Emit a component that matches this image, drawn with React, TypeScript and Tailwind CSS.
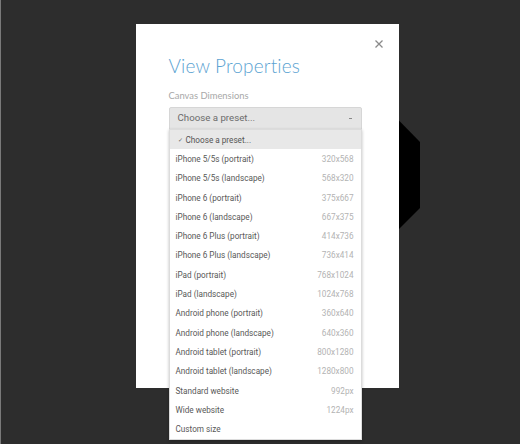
import React from "react";

const PRESETS = [
  { name: "iPhone 5/5s (portrait)", size: "320x568" },
  { name: "iPhone 5/5s (landscape)", size: "568x320" },
  { name: "iPhone 6 (portrait)", size: "375x667" },
  { name: "iPhone 6 (landscape)", size: "667x375" },
  { name: "iPhone 6 Plus (portrait)", size: "414x736" },
  { name: "iPhone 6 Plus (landscape)", size: "736x414" },
  { name: "iPad (portrait)", size: "768x1024" },
  { name: "iPad (landscape)", size: "1024x768" },
  { name: "Android phone (portrait)", size: "360x640" },
  { name: "Android phone (landscape)", size: "640x360" },
  { name: "Android tablet (portrait)", size: "800x1280" },
  { name: "Android tablet (landscape)", size: "1280x800" },
  { name: "Standard website", size: "992px" },
  { name: "Wide website", size: "1224px" },
  { name: "Custom size", size: "" },
];

export default function App() {
  return (
    <div
      className="relative w-[520px] h-[444px] overflow-hidden bg-[#2d2d2d] border-l border-[#7a7a7a] flex justify-center pt-6"
      style={{ fontFamily: "Lato, 'Open Sans', sans-serif" }}
    >
      {/* shape on the canvas behind the dialog */}
      <svg className="absolute left-0 top-0" width="520" height="444">
        <polygon points="370,92 419,142 419,208 370,257" fill="#000" />
      </svg>

      <div className="relative ml-[13px] w-[263px] h-[364px] bg-white">
        <button className="absolute right-[16px] top-[16px] text-[#8a8a8a]">
          <svg width="8" height="8" viewBox="0 0 8 8">
            <path d="M0.5 0.5 L7.5 7.5 M7.5 0.5 L0.5 7.5" stroke="currentColor" strokeWidth="1.3" />
          </svg>
        </button>

        <div className="pl-[33px] pt-[29px]">
          <h1 className="text-[19px] leading-[26px] text-[#5ca3d2] font-light tracking-[0.15px]">
            View Properties
          </h1>
          <div className="mt-[11px] text-[9.4px] leading-[12px] text-[#a8a8a8]">Canvas Dimensions</div>

          <div className="relative mt-[5px] w-[193px]">
            <div className="h-[23px] flex items-center justify-between px-[8px] bg-[#e5e5e5] border border-[#d6d6d6] rounded-t-[2px]">
              <span className="text-[9.7px] text-[#6b6b6b]" style={{ fontFamily: "Roboto, sans-serif" }}>
                Choose a preset...
              </span>
              <span className="w-[3px] h-[1px] bg-[#888] mr-[1px]"></span>
            </div>

            <div
              className="absolute left-0 top-[22px] w-[193px] bg-white border border-[#dcdcdc] shadow-[0_1px_3px_rgba(0,0,0,0.25)] z-10"
              style={{ fontFamily: "Roboto, sans-serif" }}
            >
              <div className="h-[19.33px] flex items-center bg-[#e8e8e8] pl-[8px] text-[8.2px] text-[#555]">
                <span className="text-[6px] mr-[3px] text-[#666]">✓</span>
                Choose a preset...
              </div>
              {PRESETS.map((p) => (
                <div
                  key={p.name}
                  className="h-[19.33px] flex items-center justify-between pl-[6px] pr-[7px] text-[8.2px]"
                >
                  <span className="text-[#585858]">{p.name}</span>
                  <span className="text-[#b3b3b3]">{p.size}</span>
                </div>
              ))}
            </div>
          </div>
        </div>
      </div>
    </div>
  );
}
